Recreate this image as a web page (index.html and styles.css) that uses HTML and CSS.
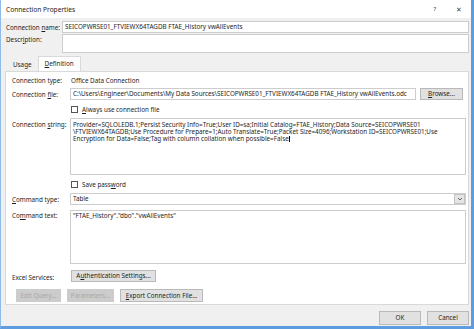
FILE: index.html
```html
<!DOCTYPE html>
<html lang="en">
<head>
    <meta charset="UTF-8">
    <title>Connection Properties</title>
    <link rel="stylesheet" href="styles.css">
</head>
<body>
    <div class="window">
        <div class="titlebar">
            <span class="title">Connection Properties</span>
            <span class="help">?</span>
            <span class="close">&#x2715;</span>
        </div>
        <div class="content">
            <div class="top-row name-row">
                <label class="top-label">Connection <u>n</u>ame:</label>
                <div class="input">SEICOPWRSE01_FTVIEWX64TAGDB FTAE_History vwAllEvents</div>
            </div>
            <div class="top-row desc-row">
                <label class="top-label">Descr<u>i</u>ption:</label>
                <div class="input tall"></div>
            </div>
            <div class="tabs">
                <div class="tab">Usage</div>
                <div class="tab active"><u>D</u>efinition</div>
            </div>
            <div class="panel">
                <div class="row type-row">
                    <span class="label">Connection type:</span>
                    <span class="value">Office Data Connection</span>
                </div>
                <div class="row file-row">
                    <span class="label">Connection <u>f</u>ile:</span>
                    <div class="input grow">C:\Users\Engineer\Documents\My Data Sources\SEICOPWRSE01_FTVIEWX64TAGDB FTAE_History vwAllEvents.odc</div>
                    <button class="button browse"><u>B</u>rowse...</button>
                </div>
                <div class="row check-row">
                    <span class="label"></span>
                    <span class="checkbox"></span>
                    <span class="check-text"><u>A</u>lways use connection file</span>
                </div>
                <div class="row string-row">
                    <span class="label">Connection <u>s</u>tring:</span>
                    <div class="input grow area">Provider=SQLOLEDB.1;Persist Security Info=True;User ID=sa;Initial Catalog=FTAE_History;Data Source=SEICOPWRSE01 \FTVIEWX64TAGDB;Use Procedure for Prepare=1;Auto Translate=True;Packet Size=4096;Workstation ID=SEICOPWRSE01;Use Encryption for Data=False;Tag with column collation when possible=False<span class="caret"></span></div>
                </div>
                <div class="row check-row pw-row">
                    <span class="label"></span>
                    <span class="checkbox"></span>
                    <span class="check-text">Save pass<u>w</u>ord</span>
                </div>
                <div class="row ctype-row">
                    <span class="label"><u>C</u>ommand type:</span>
                    <div class="input grow select">
                        <span>Table</span>
                        <span class="arrow">
                            <svg width="6" height="4" viewBox="0 0 6 4"><path d="M1 1 L3 3 L5 1" fill="none" stroke="#555" stroke-width="0.9"/></svg>
                        </span>
                    </div>
                </div>
                <div class="row ctext-row">
                    <span class="label">Co<u>m</u>mand text:</span>
                    <div class="input grow area cmd">"FTAE_History"."dbo"."vwAllEvents"</div>
                </div>
                <div class="row excel-row">
                    <span class="label">Excel Services:</span>
                    <button class="button auth">A<u>u</u>thentication Settings...</button>
                </div>
                <div class="row action-row">
                    <button class="button disabled edit">Edit Query...</button>
                    <button class="button disabled params">Parameters...</button>
                    <button class="button export"><u>E</u>xport Connection File...</button>
                </div>
            </div>
            <div class="footer">
                <button class="button ok">OK</button>
                <button class="button cancel">Cancel</button>
            </div>
        </div>
    </div>
</body>
</html>
```

FILE: styles.css
```css
* {
    box-sizing: border-box;
}
body {
    margin: 0;
    background-color: #f0f0f0;
    font-family: "Noto Sans", "Open Sans", sans-serif;
    font-size: 6.3px;
    color: #1e1e1e;
}
u {
    text-decoration-thickness: 0.5px;
    text-underline-offset: 1px;
}
.window {
    width: 474px;
    height: 329px;
    border-left: 1px solid #8fbbe8;
    border-right: 3px solid #5d9ddf;
    border-bottom: 3px solid #5d9ddf;
    display: flex;
    flex-direction: column;
    background-color: #f0f0f0;
}
.titlebar {
    height: 18px;
    background-color: #ffffff;
    display: flex;
    align-items: center;
    padding-left: 5px;
    font-size: 6.6px;
    color: #222;
}
.title {
    flex: 1;
}
.help {
    font-size: 6px;
    margin-right: 20px;
    color: #333;
}
.close {
    font-size: 7px;
    margin-right: 9px;
    color: #444;
}
.content {
    flex: 1;
    display: flex;
    flex-direction: column;
    padding: 3px 0 0 4px;
}
.top-row {
    display: flex;
    align-items: flex-start;
    margin-right: 2px;
}
.top-label {
    width: 57px;
    padding-top: 2px;
    padding-left: 1px;
}
.input {
    background-color: #ffffff;
    border: 1px solid #cdcdcd;
    height: 12px;
    line-height: 10px;
    padding: 0 2px;
    white-space: nowrap;
    overflow: hidden;
    flex: 1;
}
.input.tall {
    height: 19px;
    margin-top: 1px;
}
.tabs {
    display: flex;
    margin-top: 3px;
    padding-left: 3px;
    height: 15px;
    align-items: flex-end;
}
.tab {
    padding: 0 5px;
    height: 13px;
    line-height: 13px;
}
.tab.active {
    background-color: #ffffff;
    border: 1px solid #d9d9d9;
    border-bottom: none;
    height: 15px;
    line-height: 14px;
    padding: 0 6px;
    margin-left: 1px;
}
.panel {
    background-color: #ffffff;
    border: 1px solid #d9d9d9;
    margin-right: 2px;
    height: 234px;
    display: flex;
    flex-direction: column;
    gap: 5px;
    padding: 4px 0 0 5px;
}
.row {
    display: flex;
    align-items: flex-start;
    padding-right: 2px;
}
.label {
    width: 59px;
    flex-shrink: 0;
    padding-top: 1px;
    padding-left: 1px;
}
.type-row {
    height: 10px;
    margin-bottom: -3px;
}
.type-row .label {
    padding-top: 0;
}
.value {
    padding-left: 1px;
}
.grow {
    flex: 1;
}
.file-row .label {
    padding-top: 2px;
}
.button {
    font-family: inherit;
    font-size: 6.3px;
    color: #1e1e1e;
    background-color: #e1e1e1;
    border: 1px solid #b9b9b9;
    height: 12px;
    padding: 0;
    line-height: 10px;
}
.browse {
    width: 43px;
    margin-left: 4px;
    margin-right: 3px;
}
.check-row {
    height: 8px;
    align-items: center;
}
.checkbox {
    width: 7px;
    height: 7px;
    border: 1px solid #555;
    background-color: #ffffff;
    margin-left: 1px;
    margin-right: 4px;
}
.area {
    white-space: normal;
    line-height: 6.8px;
    padding: 3px 2px;
    height: 57px;
}
.caret {
    display: inline-block;
    width: 0.6px;
    height: 6px;
    background-color: #000;
    vertical-align: -1px;
}
.string-row .label {
    padding-top: 2px;
}
.select {
    display: flex;
    align-items: center;
    justify-content: space-between;
    padding-right: 0;
}
.arrow {
    width: 11px;
    height: 10px;
    background-color: #e5e5e5;
    border: 1px solid #c2c2c2;
    display: flex;
    align-items: center;
    justify-content: center;
}
.ctype-row .label {
    padding-top: 2px;
}
.cmd {
    height: 54px;
    padding-top: 2px;
}
.excel-row {
    margin-top: 1px;
}
.excel-row .label {
    padding-top: 3px;
}
.auth {
    width: 85px;
    margin-left: 1px;
}
.action-row {
    margin-top: 2px;
    gap: 6px;
    padding-left: 5px;
}
.action-row .button {
    height: 13px;
}
.disabled {
    color: #a8a8a8;
    background-color: #cccccc;
    border-color: #cccccc;
}
.edit {
    width: 45px;
}
.params {
    width: 47px;
}
.export {
    width: 83px;
}
.footer {
    display: flex;
    justify-content: flex-end;
    gap: 6px;
    margin-top: 6px;
    margin-right: 2px;
}
.ok, .cancel {
    width: 42px;
    height: 14px;
    line-height: 12px;
}
```
